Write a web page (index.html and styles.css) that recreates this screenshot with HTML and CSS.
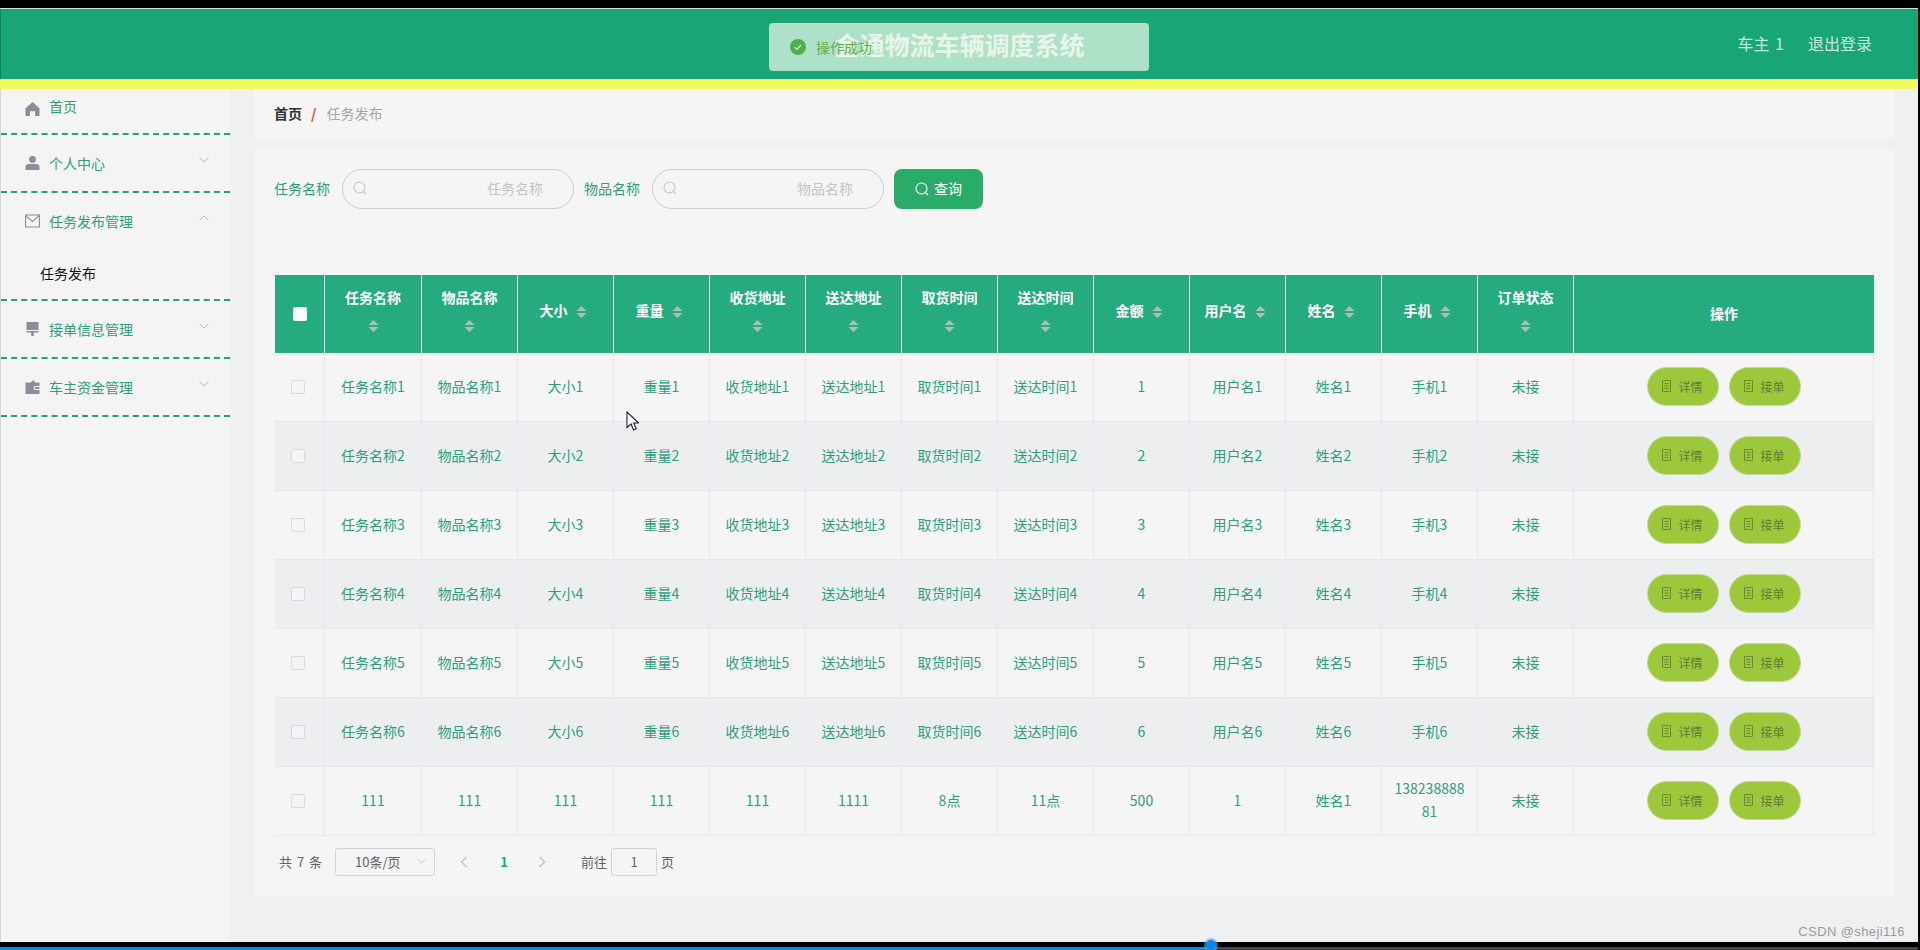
FILE: index.html
```html
<!DOCTYPE html>
<html lang="zh-CN">
<head>
<meta charset="utf-8">
<title>金通物流车辆调度系统</title>
<link rel="stylesheet" href="styles.css">
</head>
<body>
<svg class="sprite" xmlns="http://www.w3.org/2000/svg">
  <symbol id="sort" viewBox="0 0 10 11"><path d="M5 0l4.500 4.600H.5zM5 11L.5 6.400h9z" fill="#b3bdb9"/></symbol>
  <symbol id="doc" viewBox="0 0 10 12"><path d="M.5.5h8v11h-8zM2.500 3.500h4M2.500 6h4M2.500 8.500h4" fill="none" stroke="#6c7f36" stroke-width=".9"/></symbol>
  <symbol id="down" viewBox="0 0 10 6"><path d="M.5.5L5 5 9.500.5" fill="none" stroke="#b4b8bf"/></symbol>
  <symbol id="up" viewBox="0 0 10 6"><path d="M.5 5.500L5 1l4.500 4.500" fill="none" stroke="#b4b8bf"/></symbol>
  <symbol id="search" viewBox="0 0 14 14"><path d="M6.500 1a5.500 5.500 0 1 0 0 11 5.500 5.500 0 0 0 0-11zM10.500 10.500L13 13" fill="none" stroke="currentColor" stroke-width="1.100"/></symbol>
</svg>
<div class="screen">
  <div class="top-strip"></div>
  <header class="header">
    <div></div>
    <div class="title">金通物流车辆调度系统</div>
    <div class="user"><span class="owner">车主 1</span><span>退出登录</span></div>
    <div class="toast">
      <svg class="toast-icon" viewBox="0 0 16 16"><circle cx="8" cy="8" r="8" fill="#4fae4e"/><path d="M4.800 8.200l2.200 2.200 4-4.400" fill="none" stroke="#d5ecd4" stroke-width="1.300"/></svg>
      <span>操作成功</span>
    </div>
  </header>
  <div class="yellow"></div>
  <div class="main">
    <nav class="side">
      <div class="item item-first">
        <svg class="ico" viewBox="0 0 14 14"><path d="M7 0l7 6.200V14H9.600V9.200H4.400V14H0V6.200z" fill="#8b8e99"/></svg>
        <span class="label">首页</span>
      </div>
      <div class="item">
        <svg class="ico" viewBox="0 0 14 14"><circle cx="7" cy="3.400" r="3.400" fill="#8b8e99"/><path d="M0 14v-3c0-2 1.500-3 3.500-3h7c2 0 3.500 1 3.500 3v3z" fill="#8b8e99"/></svg>
        <span class="label">个人中心</span>
        <svg class="chev"><use href="#down"/></svg>
      </div>
      <div class="group">
        <div class="item item-open">
          <svg class="ico" viewBox="0 0 16 14"><path d="M.6.600h14.800v12.800H.6zM.6 1l7.400 6.500L15.400 1" fill="none" stroke="#8b8e99" stroke-width="1.200"/></svg>
          <span class="label">任务发布管理</span>
          <svg class="chev"><use href="#up"/></svg>
        </div>
        <div class="sub">任务发布</div>
      </div>
      <div class="item">
        <svg class="ico" viewBox="0 0 14 14"><path d="M1 0h12v8H1zM1 9h12v1.500H8.300V14H5.700v-3.500H1z" fill="#8b8e99"/></svg>
        <span class="label">接单信息管理</span>
        <svg class="chev"><use href="#down"/></svg>
      </div>
      <div class="item">
        <svg class="ico" viewBox="0 0 14 14"><path d="M5 2.500L8.500 0l1 2.500H14V6H10a2 2 0 0 0 0 4h4v4H0V2.500zM10.300 7h3.700v2h-3.700a1 1 0 0 1 0-2z" fill="#8b8e99"/></svg>
        <span class="label">车主资金管理</span>
        <svg class="chev"><use href="#down"/></svg>
      </div>
    </nav>
    <main class="content">
      <div class="crumbs"><b>首页</b><i>/</i><span>任务发布</span></div>
      <section class="panel">
        <form class="search">
          <label class="field-label">任务名称</label>
          <div class="input-wrap"><svg class="input-ico"><use href="#search"/></svg><input class="input" placeholder="任务名称"></div>
          <label class="field-label">物品名称</label>
          <div class="input-wrap"><svg class="input-ico"><use href="#search"/></svg><input class="input" placeholder="物品名称"></div>
          <button class="query" type="button"><svg class="query-ico"><use href="#search"/></svg>查询</button>
        </form>
        <table class="grid">
          <colgroup><col class="c-sel"><col class="c-first"><col class="c"><col class="c"><col class="c"><col class="c"><col class="c"><col class="c"><col class="c"><col class="c"><col class="c"><col class="c"><col class="c"><col class="c"><col class="c-op"></colgroup>
          <thead>
            <tr>
              <th class="sel"><span class="head-check"></span></th>
              <th><div class="th">任务名称 <svg class="sort"><use href="#sort"/></svg></div></th>
              <th><div class="th">物品名称 <svg class="sort"><use href="#sort"/></svg></div></th>
              <th><div class="th">大小 <svg class="sort"><use href="#sort"/></svg></div></th>
              <th><div class="th">重量 <svg class="sort"><use href="#sort"/></svg></div></th>
              <th><div class="th">收货地址 <svg class="sort"><use href="#sort"/></svg></div></th>
              <th><div class="th">送达地址 <svg class="sort"><use href="#sort"/></svg></div></th>
              <th><div class="th">取货时间 <svg class="sort"><use href="#sort"/></svg></div></th>
              <th><div class="th">送达时间 <svg class="sort"><use href="#sort"/></svg></div></th>
              <th><div class="th">金额 <svg class="sort"><use href="#sort"/></svg></div></th>
              <th><div class="th">用户名 <svg class="sort"><use href="#sort"/></svg></div></th>
              <th><div class="th">姓名 <svg class="sort"><use href="#sort"/></svg></div></th>
              <th><div class="th">手机 <svg class="sort"><use href="#sort"/></svg></div></th>
              <th><div class="th">订单状态 <svg class="sort"><use href="#sort"/></svg></div></th>
              <th>操作</th>
            </tr>
          </thead>
          <tbody>
            <tr><td class="sel"><span class="check"></span></td><td>任务名称1</td><td>物品名称1</td><td>大小1</td><td>重量1</td><td>收货地址1</td><td>送达地址1</td><td>取货时间1</td><td>送达时间1</td><td>1</td><td>用户名1</td><td>姓名1</td><td>手机1</td><td>未接</td><td><div class="ops"><button class="op" type="button"><svg class="doc"><use href="#doc"/></svg>详情</button><button class="op" type="button"><svg class="doc"><use href="#doc"/></svg>接单</button></div></td></tr>
            <tr><td class="sel"><span class="check"></span></td><td>任务名称2</td><td>物品名称2</td><td>大小2</td><td>重量2</td><td>收货地址2</td><td>送达地址2</td><td>取货时间2</td><td>送达时间2</td><td>2</td><td>用户名2</td><td>姓名2</td><td>手机2</td><td>未接</td><td><div class="ops"><button class="op" type="button"><svg class="doc"><use href="#doc"/></svg>详情</button><button class="op" type="button"><svg class="doc"><use href="#doc"/></svg>接单</button></div></td></tr>
            <tr><td class="sel"><span class="check"></span></td><td>任务名称3</td><td>物品名称3</td><td>大小3</td><td>重量3</td><td>收货地址3</td><td>送达地址3</td><td>取货时间3</td><td>送达时间3</td><td>3</td><td>用户名3</td><td>姓名3</td><td>手机3</td><td>未接</td><td><div class="ops"><button class="op" type="button"><svg class="doc"><use href="#doc"/></svg>详情</button><button class="op" type="button"><svg class="doc"><use href="#doc"/></svg>接单</button></div></td></tr>
            <tr><td class="sel"><span class="check"></span></td><td>任务名称4</td><td>物品名称4</td><td>大小4</td><td>重量4</td><td>收货地址4</td><td>送达地址4</td><td>取货时间4</td><td>送达时间4</td><td>4</td><td>用户名4</td><td>姓名4</td><td>手机4</td><td>未接</td><td><div class="ops"><button class="op" type="button"><svg class="doc"><use href="#doc"/></svg>详情</button><button class="op" type="button"><svg class="doc"><use href="#doc"/></svg>接单</button></div></td></tr>
            <tr><td class="sel"><span class="check"></span></td><td>任务名称5</td><td>物品名称5</td><td>大小5</td><td>重量5</td><td>收货地址5</td><td>送达地址5</td><td>取货时间5</td><td>送达时间5</td><td>5</td><td>用户名5</td><td>姓名5</td><td>手机5</td><td>未接</td><td><div class="ops"><button class="op" type="button"><svg class="doc"><use href="#doc"/></svg>详情</button><button class="op" type="button"><svg class="doc"><use href="#doc"/></svg>接单</button></div></td></tr>
            <tr><td class="sel"><span class="check"></span></td><td>任务名称6</td><td>物品名称6</td><td>大小6</td><td>重量6</td><td>收货地址6</td><td>送达地址6</td><td>取货时间6</td><td>送达时间6</td><td>6</td><td>用户名6</td><td>姓名6</td><td>手机6</td><td>未接</td><td><div class="ops"><button class="op" type="button"><svg class="doc"><use href="#doc"/></svg>详情</button><button class="op" type="button"><svg class="doc"><use href="#doc"/></svg>接单</button></div></td></tr>
            <tr><td class="sel"><span class="check"></span></td><td>111</td><td>111</td><td>111</td><td>111</td><td>111</td><td>1111</td><td>8点</td><td>11点</td><td>500</td><td>1</td><td>姓名1</td><td>13823888881</td><td>未接</td><td><div class="ops"><button class="op" type="button"><svg class="doc"><use href="#doc"/></svg>详情</button><button class="op" type="button"><svg class="doc"><use href="#doc"/></svg>接单</button></div></td></tr>
          </tbody>
        </table>
        <div class="pager">
          <span class="total">共 7 条</span>
          <div class="size">10条/页<svg class="size-chev"><use href="#down"/></svg></div>
          <svg class="arrow arrow-prev" viewBox="0 0 8 12"><path d="M6.500 1L1.500 6l5 5" fill="none" stroke="#c0c4cc" stroke-width="1.500"/></svg>
          <b class="page">1</b>
          <svg class="arrow arrow-next" viewBox="0 0 8 12"><path d="M1.500 1l5 5-5 5" fill="none" stroke="#c0c4cc" stroke-width="1.500"/></svg>
          <span class="goto">前往</span>
          <input class="page-input" value="1">
          <span class="goto-end">页</span>
        </div>
      </section>
    </main>
    <div class="mark">CSDN @sheji116</div>
    <svg class="cursor" viewBox="0 0 13 20"><path d="M1 1v15.500l4-3.500 2.600 6 2.600-1.200-2.600-5.800h5z" fill="#fff" stroke="#1d2228" stroke-width="1.100"/></svg>
  </div>
  <div class="black-bar"></div>
  <div class="progress"><div class="played"></div><span class="knob"></span></div>
</div>
</body>
</html>
```

FILE: styles.css
```css
* { box-sizing: border-box; }
html, body { margin: 0; height: 950px; overflow: hidden; background: #000; }
body { font-family: "Noto Sans CJK SC", "Noto Sans", sans-serif; font-size: 14px; }
.sprite { display: none; }
.screen { width: 1918px; height: 950px; display: flex; flex-direction: column; position: relative; }
.top-strip { height: 9px; flex: none; border-bottom: 1px solid #cfe3dc; background: #000; }

.header { height: 70px; flex: none; background: #19a576; display: grid; grid-template-columns: 1fr auto 1fr; align-items: center; position: relative; border-left: 1px solid #128059; }
.title { font-size: 25px; font-weight: 700; color: #d8ece2; line-height: 70px; }
.user { display: flex; justify-content: flex-end; gap: 24px; padding: 0 46px 2px 0; font-size: 16px; color: #c9e8dc; }
.owner { word-spacing: 2px; }
.toast { position: absolute; left: 768px; top: 14px; width: 380px; height: 48px; background: rgba(240, 249, 235, .7); border-radius: 4px; display: flex; align-items: center; padding-left: 21px; gap: 10px; color: #62b04a; font-size: 14px; }
.toast-icon { width: 16px; height: 16px; }
.yellow { height: 10px; flex: none; background: #f5f55f; }

.main { flex: 1; display: flex; background: #eef0f1; position: relative; min-height: 0; }
.side { width: 230px; flex: none; background: #f4f4f5; border-left: 1px solid #d4d6d8; }
.item { height: 58px; border-bottom: 2px dashed #26a17c; display: flex; align-items: center; padding-left: 24px; padding-right: 21px; color: #2e9e7c; }
.item-first { height: 46px; align-items: flex-start; padding-top: 6px; }
.item-open { border-bottom: 0; height: 56px; }
.group { border-bottom: 2px dashed #26a17c; }
.sub { height: 50px; line-height: 48px; padding-left: 39px; color: #111; }
.ico { width: 15px; height: 14px; flex: none; }
.item-first .ico { margin-top: 7px; }
.label { margin-left: 9px; flex: 1; line-height: 22px; }
.chev { width: 10px; height: 6px; flex: none; margin-bottom: 6px; }

.content { flex: 1; padding: 0 23px 0 24px; min-width: 0; display: flex; flex-direction: column; gap: 10px; }
.crumbs { height: 50px; background: #f5f5f5; border-radius: 0 0 4px 4px; display: flex; align-items: center; padding: 0 0 2px 20px; font-size: 14px; }
.crumbs b { color: #303133; font-weight: 700; }
.crumbs i { color: #e0442a; margin: 0 10px 0 9px; font-style: normal; font-weight: 700; }
.crumbs span { color: #a0a5ae; }
.panel { height: 747px; background: #f5f5f5; border-radius: 4px; padding: 20px 20px 0 21px; }

.search { height: 40px; display: flex; align-items: center; }
.field-label { color: #2e9e7c; width: 56px; flex: none; margin: 0 0 2px -1px; }
.input-wrap { width: 232px; height: 40px; position: relative; margin: 0 11px 0 12px; flex: none; }
.input { width: 100%; height: 40px; border: 1px solid #c9cdd2; border-radius: 20px; background: transparent; text-align: right; padding: 0 30px 2px 30px; font: inherit; outline: 0; }
.input::placeholder { color: #c0c4cc; opacity: 1; }
.input-ico { position: absolute; left: 11px; top: 12px; width: 14px; height: 14px; color: #c0c4cc; }
.query { width: 89px; height: 40px; border: 0; border-radius: 8px; background: #2bab6a; color: #fff; font: inherit; display: flex; align-items: center; justify-content: center; gap: 5px; padding: 0 0 2px; margin-left: -1px; }
.query-ico { width: 14px; height: 14px; color: #fff; margin-top: 2px; }

.grid { width: 1599px; height: 561px; margin-top: 66px; border-collapse: separate; border-spacing: 0; table-layout: fixed; }
.c-sel { width: 50px; }
.c-first { width: 97px; }
.c { width: 96px; }
.c-op { width: 300px; }
.grid th { height: 78px; padding: 0 10px 2px; background: #26aa7f; color: #fff; font-weight: 700; font-size: 14px; text-align: center; vertical-align: middle; border-right: 1px solid #e6f2ee; }
.grid th:last-child { border-right: 0; }
.th { line-height: 27px; padding-bottom: 5px; }
.sort { width: 11px; height: 12px; margin: 0 5px; vertical-align: -2px; }
.grid td { height: 69px; padding: 0 10px 2px; color: #2e9e7c; text-align: center; vertical-align: middle; line-height: 23px; word-break: break-all; border-right: 1px solid #e4e7ed; border-bottom: 1px solid #e4e7ed; }
.grid td.sel, .grid th.sel { padding: 0; text-align: left; }
.grid tbody tr:nth-child(even) td { background: #eceef0; }
.head-check { display: block; width: 14px; height: 14px; margin-left: 18px; background: #fbfcfc; border-radius: 2px; }
.check { display: block; width: 14px; height: 14px; margin-left: 16px; border: 1px solid #d6d9df; border-radius: 2px; background: #f5f5f5; }
.ops { display: flex; justify-content: center; gap: 10px; }
.op { width: 72px; height: 39px; border: 1px solid #c3d79a; border-radius: 20px; background: #9dc83b; color: #65783a; font: 12px "Noto Sans CJK SC", sans-serif; display: flex; align-items: center; justify-content: center; gap: 6px; padding: 0; }
.doc { width: 10px; height: 12px; }

.pager { margin-top: 11px; height: 29px; display: flex; align-items: center; font-size: 13px; color: #606266; padding-left: 4px; }
.total { width: 41px; flex: none; word-spacing: 2px; white-space: nowrap; }
.size { width: 100px; height: 28px; margin-left: 15px; border: 1px solid #d0d3d8; border-radius: 3px; padding-left: 19px; line-height: 26px; display: flex; align-items: center; justify-content: space-between; padding-right: 8px; flex: none; }
.size-chev { width: 9px; height: 5px; }
.arrow { width: 8px; height: 12px; flex: none; }
.arrow-prev { margin-left: 25px; }
.page { width: 16px; margin-left: 28px; text-align: center; color: #1aa878; }
.arrow-next { margin-left: 26px; }
.goto { margin-left: 35px; }
.page-input { width: 46px; height: 28px; margin-left: 4px; border: 1px solid #d0d3d8; border-radius: 3px; background: transparent; text-align: center; font: inherit; color: #606266; padding: 0; outline: 0; }
.goto-end { margin-left: 4px; }

.mark { position: absolute; right: 13px; bottom: 1px; color: #9a9da0; font-size: 13px; line-height: 18px; font-family: "Liberation Sans", sans-serif; letter-spacing: .4px; }
.cursor { position: absolute; left: 626px; top: 322px; width: 13px; height: 20px; }

.black-bar { height: 5px; flex: none; background: #000; }
.progress { height: 3px; flex: none; background: #444; position: relative; }
.played { width: 1211px; height: 3px; background: #0a88ee; }
.knob { position: absolute; left: 1206px; top: -7px; width: 10px; height: 10px; border-radius: 50%; background: #0a88ee; box-shadow: 0 0 0 2px rgba(90, 170, 240, .6); }
```
